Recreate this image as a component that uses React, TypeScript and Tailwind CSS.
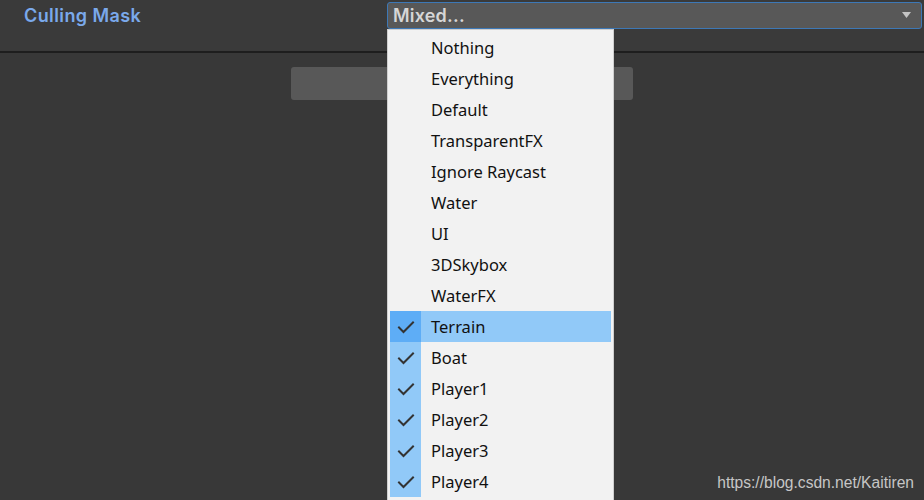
import React from "react";

const items: { name: string; checked: boolean; hover?: boolean }[] = [
  { name: "Nothing", checked: false },
  { name: "Everything", checked: false },
  { name: "Default", checked: false },
  { name: "TransparentFX", checked: false },
  { name: "Ignore Raycast", checked: false },
  { name: "Water", checked: false },
  { name: "UI", checked: false },
  { name: "3DSkybox", checked: false },
  { name: "WaterFX", checked: false },
  { name: "Terrain", checked: true, hover: true },
  { name: "Boat", checked: true },
  { name: "Player1", checked: true },
  { name: "Player2", checked: true },
  { name: "Player3", checked: true },
  { name: "Player4", checked: true },
];

function Check() {
  return (
    <svg width="18" height="14" viewBox="0 0 18 14" fill="none">
      <path d="M2 7.5 L6.5 12 L16 2.5" stroke="#333333" strokeWidth="2" strokeLinecap="square" />
    </svg>
  );
}

export default function App() {
  return (
    <div className="relative w-[924px] h-[500px] overflow-hidden bg-[#383838] font-['Inter',sans-serif]">
      <div className="flex h-[51px] items-start bg-[#3a3a3a]">
        <div className="pl-[24px] pt-[4px] text-[18px] font-semibold tracking-[0.4px] text-[#7aa9eb] leading-[24px]">
          Culling Mask
        </div>
        <div className="ml-auto mr-[2px] mt-[2px] flex h-[27px] w-[535px] items-center rounded-[3px] border border-[#3d78b6] bg-[#585858] pl-[5px] pr-[10px]">
          <span className="text-[18px] font-semibold tracking-[0.2px] text-[#d6d6d6] leading-none">Mixed...</span>
          <svg className="ml-auto" width="9" height="7" viewBox="0 0 9 7">
            <path d="M0 0 H9 L4.5 6 Z" fill="#c4c4c4" />
          </svg>
        </div>
      </div>
      <div className="h-[2px] bg-[#1e1e1e]" />
      <div className="mx-auto mt-[14px] h-[33px] w-[342px] rounded-[3px] bg-[#585858]" />

      <div className="absolute left-[387px] top-[29px] w-[227px] h-[480px] border border-[#cfcfcf] bg-[#f2f2f2] pt-[2px] px-[2px] font-['Noto_Sans',sans-serif]">
        {items.map((it) => (
          <div key={it.name} className={`flex h-[31px] items-center ${it.hover ? "bg-[#91c9f8]" : ""}`}>
            <div
              className={`flex h-full w-[31px] items-center justify-center ${
                it.hover ? "bg-[#5eadf6]" : it.checked ? "bg-[#91c9f8]" : ""
              }`}
            >
              {it.checked && <Check />}
            </div>
            <span className="pl-[10px] pt-[2px] text-[16.5px] text-[#111111] leading-none">{it.name}</span>
          </div>
        ))}
      </div>

      <div className="absolute right-[10px] bottom-[6px] font-['Liberation_Sans',sans-serif] text-[15.6px] text-[#c6c6c6]">
        https://blog.csdn.net/Kaitiren
      </div>
    </div>
  );
}
